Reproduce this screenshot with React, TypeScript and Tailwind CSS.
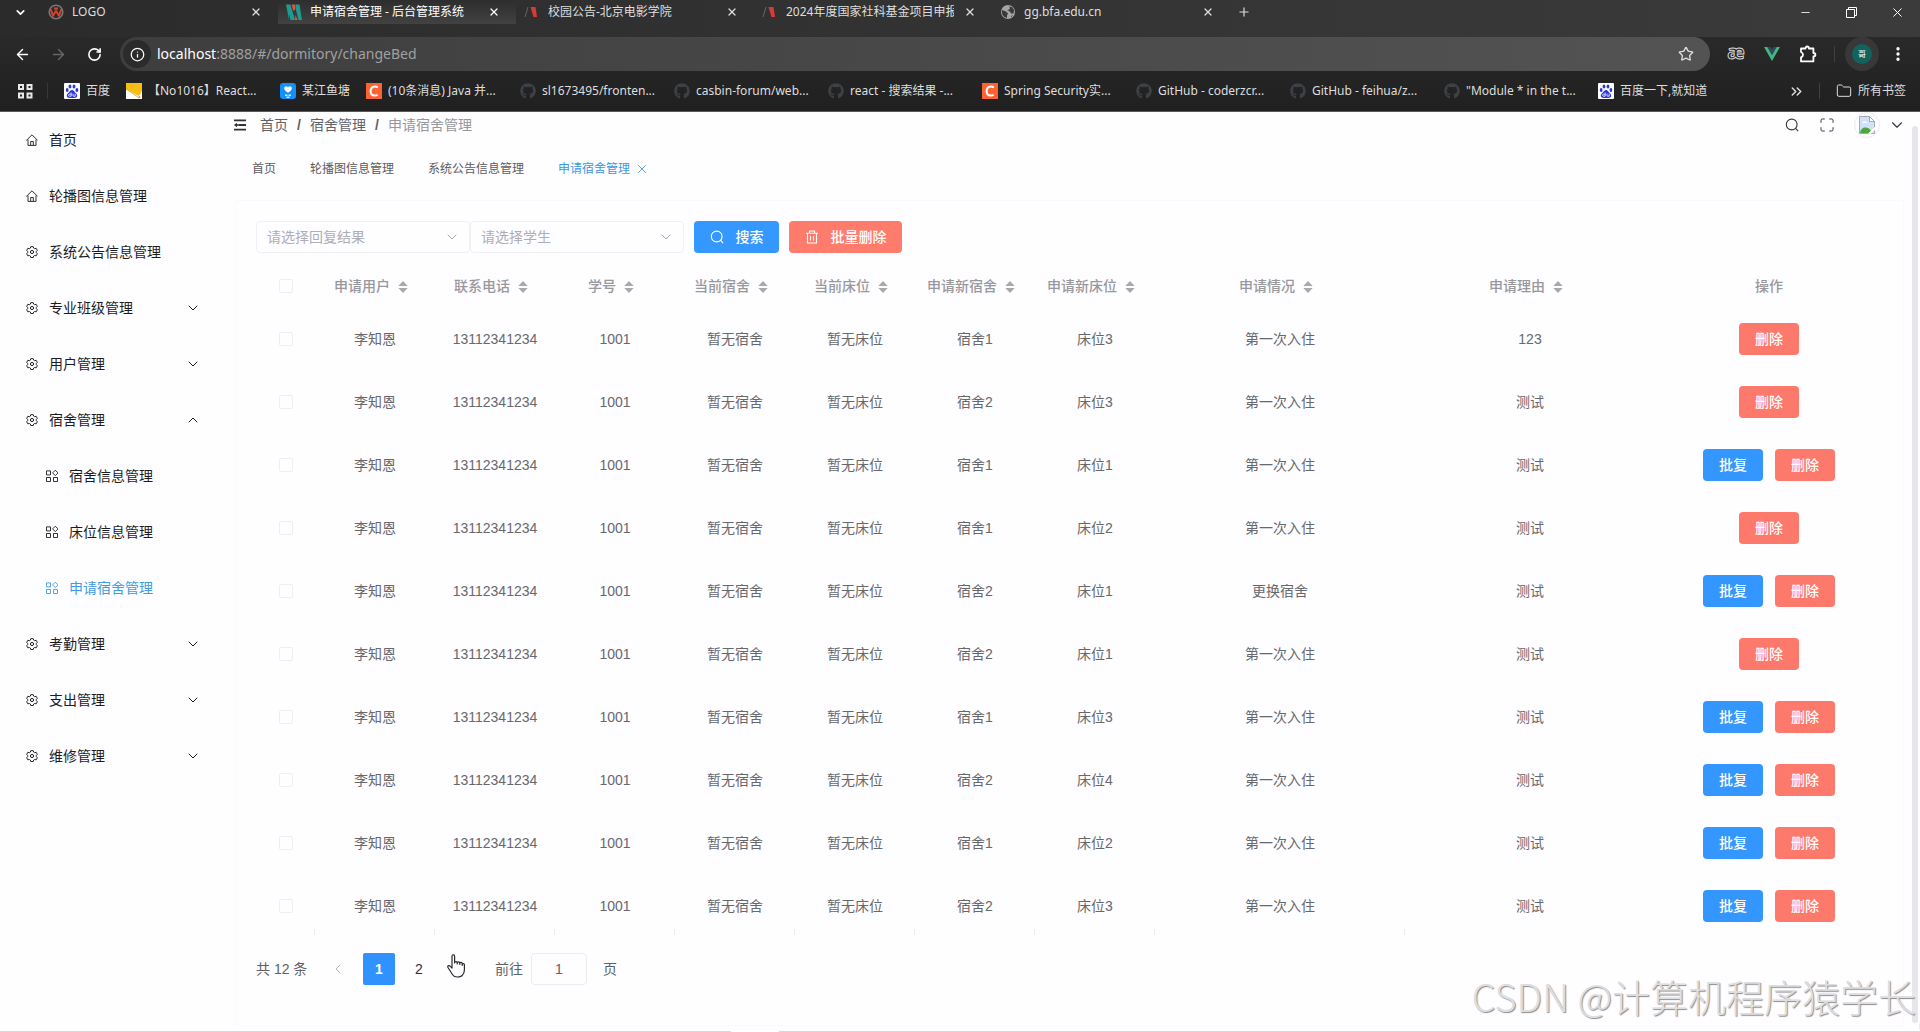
import type { ReactNode } from 'react';
import { ArrowLeft, ArrowRight, ChevronDown, ChevronLeft, ChevronUp, ChevronsRight, Folder, Info, Maximize, Minus, MoreVertical, Plus, RotateCw, Star, X } from 'lucide-react';
import { FaGithub } from 'react-icons/fa';

const tabs = [
  { title: 'LOGO', icon: 'logo' },
  { title: '申请宿舍管理 - 后台管理系统', icon: 'app', active: true },
  { title: '校园公告-北京电影学院', icon: 'film' },
  { title: '2024年度国家社科基金项目申报', icon: 'film' },
  { title: 'gg.bfa.edu.cn', icon: 'globe' },
];

const bookmarks = [
  { title: '百度', icon: 'baidu', width: 'w-[62px]' },
  { title: '【No1016】React...', icon: 'yellow', width: 'w-[154px]' },
  { title: '某江鱼塘', icon: 'blue', width: 'w-[86px]' },
  { title: '(10条消息) Java 并...', icon: 'csdn', width: 'w-[154px]' },
  { title: 'sl1673495/fronten...', icon: 'github', width: 'w-[154px]' },
  { title: 'casbin-forum/web...', icon: 'github', width: 'w-[154px]' },
  { title: 'react - 搜索结果 -...', icon: 'github', width: 'w-[154px]' },
  { title: 'Spring Security实...', icon: 'csdn', width: 'w-[154px]' },
  { title: 'GitHub - coderzcr...', icon: 'github', width: 'w-[154px]' },
  { title: 'GitHub - feihua/z...', icon: 'github', width: 'w-[154px]' },
  { title: '"Module * in the t...', icon: 'github', width: 'w-[154px]' },
  { title: '百度一下,就知道', icon: 'baidu', width: 'w-[154px]' },
];

const menu = [
  { title: '首页', icon: 'home' },
  { title: '轮播图信息管理', icon: 'home' },
  { title: '系统公告信息管理', icon: 'gear' },
  { title: '专业班级管理', icon: 'gear', arrow: 'down' },
  { title: '用户管理', icon: 'gear', arrow: 'down' },
  { title: '宿舍管理', icon: 'gear', arrow: 'up' },
  { title: '宿舍信息管理', icon: 'grid', sub: true },
  { title: '床位信息管理', icon: 'grid', sub: true },
  { title: '申请宿舍管理', icon: 'grid', sub: true, active: true },
  { title: '考勤管理', icon: 'gear', arrow: 'down' },
  { title: '支出管理', icon: 'gear', arrow: 'down' },
  { title: '维修管理', icon: 'gear', arrow: 'down' },
];

const columns = ['申请用户', '联系电话', '学号', '当前宿舍', '当前床位', '申请新宿舍', '申请新床位', '申请情况', '申请理由'];

const rows = [
  { room: '宿舍1', bed: '床位3', state: '第一次入住', reason: '123', reply: false },
  { room: '宿舍2', bed: '床位3', state: '第一次入住', reason: '测试', reply: false },
  { room: '宿舍1', bed: '床位1', state: '第一次入住', reason: '测试', reply: true },
  { room: '宿舍1', bed: '床位2', state: '第一次入住', reason: '测试', reply: false },
  { room: '宿舍2', bed: '床位1', state: '更换宿舍', reason: '测试', reply: true },
  { room: '宿舍2', bed: '床位1', state: '第一次入住', reason: '测试', reply: false },
  { room: '宿舍1', bed: '床位3', state: '第一次入住', reason: '测试', reply: true },
  { room: '宿舍2', bed: '床位4', state: '第一次入住', reason: '测试', reply: true },
  { room: '宿舍1', bed: '床位2', state: '第一次入住', reason: '测试', reply: true },
  { room: '宿舍2', bed: '床位3', state: '第一次入住', reason: '测试', reply: true },
];

function SiteIcon({ name }: { name: string }) {
  if (name === 'github') return <FaGithub className="size-4 shrink-0 text-[#3c4146]" />;
  if (name === 'globe')
    return (
      <svg viewBox="0 0 16 16" className="size-4 shrink-0">
        <circle cx="8" cy="8" r="7" fill="#a6a6a6" />
        <path d="M2 6l4 1.500 2 2-1 2v2.500Q2.500 13 2 9zM8 2.500l2 1-.5 2-2.500.5 3 1.500 1 2h2.500L14 6l-2-3zM11 12l2-1-2 2.500z" fill="#3a3a3a" />
      </svg>
    );
  if (name === 'csdn')
    return (
      <svg viewBox="0 0 16 16" className="size-4 shrink-0">
        <rect width="16" height="16" fill="#fc6232" />
        <path d="M11.8 4.4Q10.6 3.4 9 3.4C6.3 3.4 4.6 5.4 4.6 8.1c0 2.8 1.6 4.5 4.1 4.5q1.7 0 2.9-.9" fill="none" stroke="#fff" strokeWidth="2" />
      </svg>
    );
  if (name === 'baidu')
    return (
      <svg viewBox="0 0 16 16" className="size-4 shrink-0">
        <rect width="16" height="16" rx="1" fill="#fff" />
        <g fill="#2c37d8">
          <ellipse cx="3.2" cy="7" rx="1.4" ry="2" />
          <ellipse cx="6" cy="3.6" rx="1.4" ry="2" />
          <ellipse cx="10" cy="3.6" rx="1.4" ry="2" />
          <ellipse cx="12.9" cy="7" rx="1.4" ry="2" />
          <path d="M8 7c1.6 0 2.2 1.500 3.400 2.700 1.300 1.200 2.100 2.100 1.700 3.600-.4 1.700-2 1.700-5.100 1.700s-4.700 0-5.100-1.700c-.4-1.500.4-2.400 1.700-3.600C5.800 8.500 6.400 7 8 7z" />
        </g>
        <path d="M7.200 9.500v3.700H5.500q-.9 0-.9-1t.9-1h1.700M9 10.700v2q0 .5.600.5h1.600v-2.500" fill="none" stroke="#fff" strokeWidth=".8" />
      </svg>
    );
  if (name === 'yellow')
    return (
      <svg viewBox="0 0 16 16" className="size-4 shrink-0">
        <rect width="16" height="16" fill="#fff" />
        <path d="M0 0h16v8l-3 5-4-2-9-5z" fill="#fbbd13" />
        <path d="M0 6l9 6 4 3" fill="none" stroke="#d8a013" strokeWidth=".8" />
        <circle cx="13.500" cy="14" r="1" fill="#e8951a" />
      </svg>
    );
  if (name === 'blue')
    return (
      <svg viewBox="0 0 16 16" className="size-4 shrink-0">
        <rect width="16" height="16" rx="3" fill="#1590fb" />
        <path d="M4.500 4Q6.500 2.500 8 4.500 9.500 2.500 11.500 4 13 6.500 8 9.800 3 6.500 4.500 4z" fill="#fff" />
        <path d="M5 11.500h2.500V13H5zM8.500 11.500H11V13H8.500zM6.500 13.500h3V15h-3z" fill="#d5ecff" />
      </svg>
    );
  if (name === 'logo')
    return (
      <svg viewBox="0 0 16 16" className="size-4 shrink-0">
        <circle cx="8" cy="8" r="6.800" fill="none" stroke="#777" strokeWidth="1.600" />
        <path d="M2.500 5l2.500 6.500L8 7l3 4.500L13.500 5M6 4.500h4" fill="none" stroke="#d8402f" strokeWidth="2" />
      </svg>
    );
  if (name === 'app')
    return (
      <svg viewBox="0 0 16 17" className="h-[17px] w-4 shrink-0">
        <path d="M0 .5h4.500L9 16H4.500L3 10v6zM10 .5h3.500L16 16h-3.500L9.500 4z" fill="#1f9a92" />
        <path d="M5.500.5h4L9 6 7.500 7zM9 16l.5-5 2 5z" fill="#e5523f" />
      </svg>
    );
  return (
    <svg viewBox="0 0 16 16" className="size-4 shrink-0">
      <path d="M1 13L4 3" stroke="#666" strokeWidth="1" />
      <path d="M6.500 3h5l1.500 10H9.500z" fill="#d93a35" />
    </svg>
  );
}

function MenuIcon({ name }: { name: string }) {
  if (name === 'home')
    return (
      <svg viewBox="0 0 12 12" className="size-3 shrink-0" fill="none" stroke="currentColor" strokeWidth=".9">
        <path d="M.4 6.400L6 .8l5.600 5.600M2 5.500v5.900h8V5.500M4.700 11.400V7.500h2.600v3.900" />
      </svg>
    );
  if (name === 'grid')
    return (
      <svg viewBox="0 0 12 12" className="size-3 shrink-0" fill="none" stroke="currentColor" strokeWidth=".9">
        <path d="M.5.9h4v4h-4zM.5 7.500h4v4h-4zM7.500 7.500h4v4h-4zM9.300.2L12 2.900 9.300 5.600 6.600 2.900z" />
      </svg>
    );
  return (
    <svg viewBox="40 40 944 944" className="size-3 shrink-0" fill="none" stroke="currentColor" strokeWidth="78">
      <path d="M420 90h184l42 118 70 40 124-22 90 158-80 96v76l80 96-90 158-124-22-70 40-42 118H420l-42-118-70-40-124 22-90-158 80-96v-76l-80-96 90-158 124 22 70-40z" strokeLinejoin="round" />
      <circle cx="512" cy="512" r="125" />
    </svg>
  );
}

function SortIcon() {
  return (
    <svg viewBox="0 0 10 12" className="ml-2 mr-2 inline-block h-3 w-2.5 align-middle text-[#a9a9ae]" fill="currentColor">
      <path d="M5 0l4.700 5H.3zM5 12L.3 7h9.400z" />
    </svg>
  );
}

function Check({ label }: { label: string }) {
  return <input type="checkbox" aria-label={label} className="mx-auto block size-3.5 appearance-none rounded-xs border border-[#efeff2]" />;
}

function Btn({ color, className = '', children }: { color: string; className?: string; children: ReactNode }) {
  return (
    <button className={`inline-flex h-8 items-center justify-center rounded text-sm font-medium text-white ${color} ${className}`}>
      {children}
    </button>
  );
}

function Browser() {
  return (
    <header className="flex flex-col border-b border-[#5a5a5a] bg-gradient-to-b from-[#2e2e2e] to-[#202020] font-['Noto_Sans','Noto_Sans_CJK_SC',sans-serif] text-xs text-[#dedede]">
      <div className="flex h-[37px] items-start bg-gradient-to-r from-[#2b2b2b] to-[#3b3b3b]">
        <button aria-label="搜索标签页" className="flex h-6 w-10 items-center justify-center text-white">
          <ChevronDown size={13} strokeWidth={3} />
        </button>
        {tabs.map((tab) => (
          <div key={tab.title} className={`flex h-6 w-[238px] items-center gap-2 pl-2 pr-3.5 ${tab.active ? 'rounded-t-lg bg-gradient-to-b from-[#2d2d2d] to-[#424242] text-white' : ''}`}>
            <SiteIcon name={tab.icon} />
            <span className="flex-1 overflow-hidden whitespace-nowrap">{tab.title}</span>
            <button aria-label="关闭" className="flex w-4 justify-center">
              <X size={12} strokeWidth={2.500} />
            </button>
          </div>
        ))}
        <button aria-label="新标签页" className="flex h-6 w-7 items-center justify-center">
          <Plus size={14} />
        </button>
        <div className="ml-auto flex text-white">
          <button aria-label="最小化" className="flex h-6 w-[46px] items-center justify-center"><Minus size={13} strokeWidth={1.500} /></button>
          <button aria-label="还原" className="flex h-6 w-[46px] items-center justify-center">
            <svg viewBox="0 0 11 11" className="size-[11px]" fill="none" stroke="currentColor">
              <path d="M.5 2.500h8v8h-8zM2.500 2.500v-2h8v8h-2" />
            </svg>
          </button>
          <button aria-label="关闭窗口" className="flex h-6 w-[46px] items-center justify-center"><X size={15} strokeWidth={1.600} /></button>
        </div>
      </div>
      <div className="flex h-[34px] items-center px-1">
        <button aria-label="后退" className="flex w-9 justify-center text-white"><ArrowLeft size={17} /></button>
        <button aria-label="前进" className="flex w-9 justify-center text-[#666]"><ArrowRight size={17} /></button>
        <button aria-label="刷新" className="flex w-9 justify-center text-white"><RotateCw size={15} strokeWidth={2.500} /></button>
        <div className="ml-2 flex h-full flex-1 items-center rounded-full bg-gradient-to-r from-[#3e3e3e] to-[#535353] pl-[3px] pr-4">
          <span className="flex size-7 items-center justify-center rounded-full bg-[#2b2b2b] text-white"><Info size={15} /></span>
          <span className="ml-1.5 text-sm text-[#a0a0a0]"><span className="text-white">localhost</span>:8888/#/dormitory/changeBed</span>
          <Star size={16} className="ml-auto" />
        </div>
        <div className="flex w-[206px] items-center text-white">
          <span className="ml-2 flex w-9 justify-center">
            <svg viewBox="0 0 18 16" className="h-4 w-[18px]">
              <text x="9" y="13" textAnchor="middle" fontSize="19" fontWeight="700" fill="#232323" stroke="#d6d6d6" strokeWidth="1">æ</text>
            </svg>
          </span>
          <span className="flex w-9 justify-center">
            <svg viewBox="0 0 16 14" className="h-3.5 w-4">
              <path d="M0 0h3.500L8 8l4.500-8H16L8 14z" fill="#41b883" />
              <path d="M3.500 0h3L8 2.500 9.500 0h3L8 8z" fill="#35495e" />
            </svg>
          </span>
          <span className="flex w-9 justify-center">
            <svg viewBox="0 0 18 18" className="size-[18px]" fill="none" stroke="#fff" strokeWidth="1.800" strokeLinejoin="round">
              <path d="M2 3.500h4.500q0-2 1.700-2t1.700 2h4.500V8q2 0 2 1.700t-2 1.700v5H2v-4q2-.8 2-2.700T2 7z" />
            </svg>
          </span>
          <span className="ml-2 h-4 w-px bg-[#404040]" />
          <span className="ml-2.5 flex size-[34px] items-center justify-center rounded-full bg-[#383838]">
            <span className="flex size-5 items-center justify-center rounded-full bg-[#12635d] text-[8px]">哥</span>
          </span>
          <button aria-label="菜单" className="ml-auto flex w-9 justify-center"><MoreVertical size={18} strokeWidth={2.500} /></button>
        </div>
      </div>
      <nav className="flex h-10 items-center pl-[17px]">
        <svg viewBox="0 0 16 16" className="size-4" fill="none" stroke="#e8e8e8" strokeWidth="2">
          <path d="M2 2h4v4H2zM10.500 2h4v4h-4zM2 10.500h4v4H2zM10.500 10.500h4v4h-4z" />
        </svg>
        <span className="ml-3.5 mr-4 h-4 w-px bg-[#383838]" />
        {bookmarks.map((b) => (
          <a key={b.title} href="#" className={`flex shrink-0 items-center gap-1.5 whitespace-nowrap ${b.width}`}>
            <SiteIcon name={b.icon} />
            {b.title}
          </a>
        ))}
        <ChevronsRight size={17} className="ml-auto" />
        <span className="ml-3.5 mr-4 h-4 w-px bg-[#404040]" />
        <a href="#" className="mr-3.5 flex items-center gap-1.5"><Folder size={16} strokeWidth={1.500} />所有书签</a>
      </nav>
    </header>
  );
}

function Sidebar() {
  return (
    <aside className="w-56 shrink-0">
      {menu.map((item) => (
        <a key={item.title} href="#" className={`flex h-14 items-center pr-[25px] ${item.sub ? 'pl-[46px]' : 'pl-[26px]'} ${item.active ? 'text-[#409ce0]' : 'text-[#1c1c1f]'}`}>
          <MenuIcon name={item.icon} />
          <span className="ml-[11px] flex-1">{item.title}</span>
          {item.arrow === 'down' && <ChevronDown size={16} strokeWidth={1.500} className="-mr-0.5" />}
          {item.arrow === 'up' && <ChevronUp size={16} strokeWidth={1.500} className="-mr-0.5" />}
        </a>
      ))}
    </aside>
  );
}

function Filter({ label }: { label: string }) {
  return (
    <div className="relative w-[214px]">
      <select aria-label={label} className="h-8 w-full appearance-none rounded border border-[#f1f0f4] px-2.5 text-sm text-[#aeaeb6]">
        <option>{label}</option>
      </select>
      <ChevronDown size={16} strokeWidth={1.500} className="pointer-events-none absolute right-2.5 top-2 text-[#a5a5ad]" />
    </div>
  );
}

function SearchIcon({ className }: { className: string }) {
  return (
    <svg viewBox="0 0 14 14" className={className} fill="none" stroke="currentColor" strokeWidth="1.100">
      <circle cx="6.700" cy="6.500" r="5.400" />
      <path d="M10.600 10.400l2.600 2.800" />
    </svg>
  );
}

export default function App() {
  return (
    <div className="relative flex min-h-screen flex-col overflow-hidden bg-[#fefdff] font-['Liberation_Sans','Noto_Sans_CJK_SC',sans-serif] text-sm">
      <Browser />
      <div className="flex flex-1">
        <Sidebar />
        <main className="min-w-0 flex-1 pl-[11px] pr-2">
          <div className="flex h-[26px] items-center text-[#606266]">
            <button aria-label="折叠菜单" className="-ml-px text-[#303133]">
              <svg viewBox="0 0 12 12" className="size-3" fill="currentColor">
                <path d="M0 .5h12v1.800H0zM5 5.100h7v1.800H5zM0 9.700h12v1.800H0zM0 6l3-2.300v1.500h2v1.600H3v1.500z" />
              </svg>
            </button>
            <a href="#" className="ml-3.5">首页</a>
            <span className="w-[22px] text-center font-bold">/</span>
            <a href="#">宿舍管理</a>
            <span className="w-[22px] text-center font-bold">/</span>
            <span className="text-[#97979c]">申请宿舍管理</span>
            <div className="-mr-0.5 ml-auto flex items-center text-[#38383c]">
              <SearchIcon className="size-3.5" />
              <Maximize size={16} strokeWidth={1.500} className="ml-5" />
              <span className="ml-[19px] flex size-[26px] items-center justify-center rounded-full border border-[#ececf0]">
                <svg viewBox="0 0 16 18" className="h-[18px] w-4">
                  <path d="M.5.500h10l5 5v12H.5z" fill="#cfe2fb" stroke="#a9a9ad" />
                  <path d="M10.500.500v5h5z" fill="#fff" stroke="#a9a9ad" />
                  <path d="M3.500 6.500q1-2 3-1 1.500 0 1.500 1.500H3z" fill="#fff" />
                  <path d="M1 17q1-6 6-5.500 3 0 5 3l-2 2.500z" fill="#4ea53c" />
                  <path d="M9 17.800l7-7v3l-4 4z" fill="#fff" />
                </svg>
              </span>
              <ChevronDown size={18} strokeWidth={1.500} className="ml-2" />
            </div>
          </div>
          <nav className="mt-[15px] flex h-8 items-center gap-[34px] pl-[17px] text-xs text-[#5c5c60]">
            <a href="#">首页</a>
            <a href="#">轮播图信息管理</a>
            <a href="#">系统公告信息管理</a>
            <a href="#" className="flex items-center gap-[5px] text-[#3b98e0]">
              申请宿舍管理
              <X size={14} strokeWidth={1.500} />
            </a>
          </nav>
          <section className="mt-[15px] border border-[#fafafc] px-5 pb-10 pt-5">
            <div className="flex">
              <Filter label="请选择回复结果" />
              <Filter label="请选择学生" />
              <Btn color="bg-[#3598ff]" className="ml-2.5 w-[85px] gap-3">
                <SearchIcon className="size-3.5" />搜索
              </Btn>
              <Btn color="bg-[#ff7b6c]" className="ml-2.5 w-[113px] gap-3">
                <svg viewBox="0 0 14 14" className="size-3.5" fill="none" stroke="currentColor" strokeWidth="1.100">
                  <path d="M1 3.200h12M4.500 3V1h5v2M2.500 3.200V13h9V3.200M5.500 6v4.500M8.500 6v4.500" />
                </svg>
                批量删除
              </Btn>
            </div>
            <table className="mt-3 w-full table-fixed text-center text-[#68686c]">
              <colgroup>
                <col className="w-[59px]" />
                {columns.map((c, i) => (
                  <col key={c} className={i < 7 ? 'w-[120px]' : 'w-[250px]'} />
                ))}
                <col />
              </colgroup>
              <thead>
                <tr className="h-[42px] text-[#98989d]">
                  <th><Check label="全选" /></th>
                  {columns.map((c) => (
                    <th key={c} className="whitespace-nowrap font-medium">{c}<SortIcon /></th>
                  ))}
                  <th className="font-medium">操作</th>
                </tr>
              </thead>
              <tbody>
                {rows.map((row, i) => (
                  <tr key={i} className="h-[63px] last:[&>td]:after:absolute last:[&>td]:after:bottom-0.5 last:[&>td]:after:right-0 last:[&>td]:after:h-1.5 last:[&>td]:after:w-px last:[&>td]:after:bg-[#ececf0]">
                    <td className="relative"><Check label={`选择第${i + 1}行`} /></td>
                    <td className="relative">李知恩</td>
                    <td className="relative">13112341234</td>
                    <td className="relative">1001</td>
                    <td className="relative">暂无宿舍</td>
                    <td className="relative">暂无床位</td>
                    <td className="relative">{row.room}</td>
                    <td className="relative">{row.bed}</td>
                    <td className="relative">{row.state}</td>
                    <td>{row.reason}</td>
                    <td>
                      <div className="flex justify-center gap-3">
                        {row.reply && <Btn color="bg-[#3496ff]" className="w-15">批复</Btn>}
                        <Btn color="bg-[#fd796b]" className="w-15">删除</Btn>
                      </div>
                    </td>
                  </tr>
                ))}
              </tbody>
            </table>
            <div className="mt-4 flex h-8 items-center text-[#606266]">
              <span className="w-[66px]">共 12 条</span>
              <button aria-label="上一页" className="flex w-8 justify-center text-[#b4b4ba]"><ChevronLeft size={16} strokeWidth={1.500} /></button>
              <button className="ml-[9px] size-8 rounded-xs bg-[#2f92ff] font-bold text-white">1</button>
              <button className="ml-2 size-8 text-[#303133]">2</button>
              <svg viewBox="0 0 18 24" className="mb-1.5 ml-3 h-6 w-[18px]" fill="#fff" stroke="#2a2a2e" strokeWidth="1.200" strokeLinejoin="round">
                <path d="M5 14V2.300Q5 .8 6.300.8t1.300 1.500V9q0-1.300 1.300-1.300T10.200 9v1-1q0-1.200 1.300-1.200T12.800 9v1.500-1q0-1.100 1.200-1.100t1.200 1.100v2-1q0-.9 1.100-.9t1.100.9v5.500q0 3-2 5.200-1.200 1.800-5 1.800-3.400 0-4.800-2.300L1 13.500Q.3 12 1.500 11.600q1-.3 1.900.7z" />
              </svg>
              <label htmlFor="page" className="ml-[30px]">前往</label>
              <input id="page" defaultValue="1" className="ml-2 h-8 w-14 rounded border border-[#ececf0] text-center" />
              <span className="ml-4">页</span>
            </div>
          </section>
        </main>
        <div className="mb-2 mr-0.5 mt-3.5 w-1.5 rounded-full bg-[#e7e6eb]" />
      </div>
      <div className="flex h-px gap-12">
        <div className="w-[731px] bg-[#d8d8d8]" />
        <div className="flex-1 bg-[#d8d8d8]" />
      </div>
      <p className="pointer-events-none absolute bottom-2 right-1 whitespace-nowrap font-['Noto_Sans_CJK_SC',sans-serif] text-[38px] font-light leading-[56px] text-[#dedee0] [text-shadow:1px_1px_1px_#8c8c8c]">
        CSDN @计算机程序猿学长
      </p>
    </div>
  );
}
